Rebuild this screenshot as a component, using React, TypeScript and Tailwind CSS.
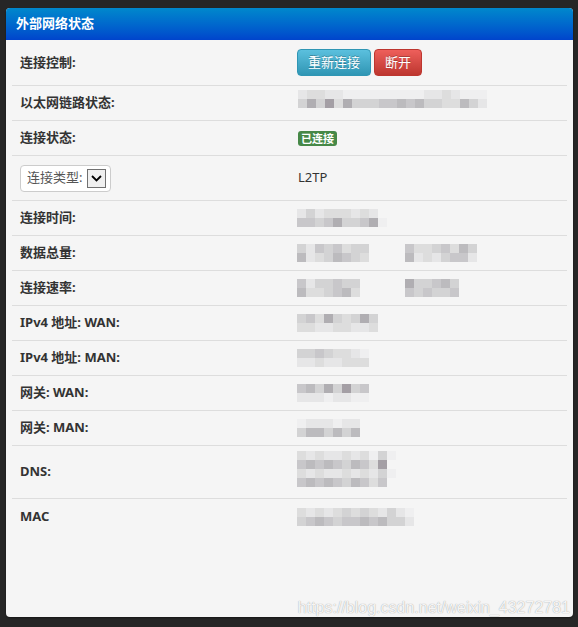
import type { ReactNode } from 'react';

// blurred values are drawn as grey mosaics, one char per 9px cell
const shade: Record<string, string> = {
  '0': 'bg-[#efeff0]',
  '1': 'bg-[#e6e6e7]',
  '2': 'bg-[#dddddd]',
  '3': 'bg-[#d3d3d4]',
  '4': 'bg-[#c8c7ca]',
  '5': 'bg-[#bcbbbe]',
  '6': 'bg-[#b0aeb2]',
  '7': 'bg-[#a49fa5]',
};

const Mosaic = ({ rows, className = '' }: { rows: string[]; className?: string }) => (
  <div className={`flex flex-col ${className}`}>
    {rows.map((r, i) => (
      <div key={i} className="flex">
        {r.split('').map((c, j) => (
          <span key={j} className={`h-[9px] w-[9px] ${shade[c] ?? ''}`} />
        ))}
      </div>
    ))}
  </div>
);

const Row = ({ label, h = 'h-[35px]', last = false, children }: { label: ReactNode; h?: string; last?: boolean; children?: ReactNode }) => (
  <div className={`grid grid-cols-[277px_1fr] items-center px-2 ${h} ${last ? '' : 'border-b border-[#dddddd]'}`}>
    <div className="text-[13px] font-bold text-[#333333]">{label}</div>
    <div className="flex items-center">{children}</div>
  </div>
);

const App = () => {
  return (
    <div className="h-[627px] w-[578px] bg-[#262626] pl-[6px] pt-[8px] font-['Noto_Sans','Noto_Sans_CJK_SC',sans-serif]">
      <div className="flex h-[609px] w-[567px] flex-col overflow-hidden rounded-[4px] bg-[#f5f5f5] shadow-[0_1px_2px_rgba(0,0,0,0.4)]">
        {/* Header */}
        <div className="flex h-[32px] items-center bg-gradient-to-b from-[#0088cc] to-[#0044cc] px-[10px] text-[13px] font-bold text-white">
          外部网络状态
        </div>

        <div className="mx-[6px] flex flex-col">
          <Row label="连接控制:" h="h-[46px]">
            <div className="flex gap-[3px]">
              <button className="h-[27px] rounded-[4px] border border-[#2f96b4] bg-gradient-to-b from-[#5bc0de] to-[#2f96b4] px-[10px] text-[13px] text-white [text-shadow:0_-1px_0_rgba(0,0,0,0.25)]">
                重新连接
              </button>
              <button className="h-[27px] rounded-[4px] border border-[#bd362f] bg-gradient-to-b from-[#ee5f5b] to-[#bd362f] px-[10px] text-[13px] text-white [text-shadow:0_-1px_0_rgba(0,0,0,0.25)]">
                断开
              </button>
            </div>
          </Row>
          <Row label="以太网链路状态:">
            <Mosaic className="-mt-[8px] ml-px" rows={['122110000000001121000', '363726333445453322531']} />
          </Row>
          <Row label="连接状态:">
            <span className="ml-px rounded-[3px] bg-[#468847] px-[3px] text-[11px] font-bold leading-[15px] text-white">
              已连接
            </span>
          </Row>
          <Row
            h="h-[45px]"
            label={
              <div className="flex h-[27px] w-[91px] items-center gap-[5px] rounded-[4px] border border-[#cccccc] bg-white pl-[6px] text-[13px] font-normal text-[#555555]">
                <span>连接类型:</span>
                <span className="flex h-[19px] w-[19px] items-center justify-center border border-[#707070] bg-[#f0f0f0]">
                  <svg width="11" height="7" viewBox="0 0 11 7">
                    <polyline points="1,1 5.5,5.5 10,1" fill="none" stroke="#000" strokeWidth="1.8" />
                  </svg>
                </span>
              </div>
            }
          >
            <span className="ml-px text-[13px] text-[#333333]">L2TP</span>
          </Row>
          <Row label="连接时间:">
            <Mosaic rows={['131222121', '4434633460']} />
          </Row>
          <Row label="数据总量:">
            <Mosaic rows={['31434233    42234253', '51235432    51213441']} />
          </Row>
          <Row label="连接速率:">
            <Mosaic rows={['4133433     633453', '5223452     434334']} />
          </Row>
          <Row label="IPv4 地址: WAN:">
            <Mosaic rows={['342632363', '221122112']} />
          </Row>
          <Row label="IPv4 地址: MAN:">
            <Mosaic rows={['33432210', '11211222']} />
          </Row>
          <Row label="网关: WAN:">
            <Mosaic rows={['45363734', '11101100']} />
          </Row>
          <Row label="网关: MAN:">
            <Mosaic rows={['0111011', '3553535']} />
          </Row>
          <Row label="DNS:" h="h-[53px]">
            <Mosaic className="-mt-[6px]" rows={['21211212030', '4545435427', '21211212130', '4545435424']} />
          </Row>
          <Row label="MAC" last>
            <Mosaic rows={['2121232321310', '3454344545331']} />
          </Row>
        </div>

        <div className="flex flex-1 items-end justify-end pr-[3px]">
          <span className="font-['Liberation_Sans',sans-serif] text-[16px] leading-[19px] text-white/90 [text-shadow:0_0_1px_#8a8a8a]">
            https://blog.csdn.net/weixin_43272781
          </span>
        </div>
      </div>
    </div>
  );
};

export default App;
